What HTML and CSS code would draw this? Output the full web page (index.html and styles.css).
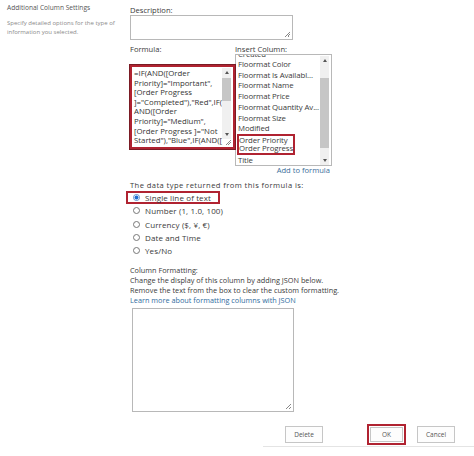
FILE: index.html
```html
<!DOCTYPE html>
<html lang="en">
<head>
    <meta charset="UTF-8">
    <title>Column Settings</title>
    <link rel="stylesheet" href="styles.css">
</head>
<body>
    <div class="page">
        <div class="side">
            <div class="side-title">Additional Column Settings</div>
            <div class="side-desc">Specify detailed options for the type of information you selected.</div>
        </div>

        <div class="main">
            <div class="label">Description:</div>
            <div class="box desc-box"><span class="grip"></span></div>

            <div class="formula-row">
                <div class="formula-col">
                    <div class="label">Formula:</div>
                    <div class="formula-box">
                        <div class="formula-text">=IF(AND([Order<br>Priority]="Important",<br>[Order Progress<br>]="Completed"),"Red",IF(<br>AND([Order<br>Priority]="Medium",<br>[Order Progress ]="Not<br>Started"),"Blue",IF(AND([</div>
                        <div class="scroll">
                            <span class="arrow up"></span>
                            <span class="thumb formula-thumb"></span>
                            <span class="arrow down"></span>
                        </div>
                        <span class="grip"></span>
                    </div>
                </div>
                <div class="insert-col">
                    <div class="label">Insert Column:</div>
                    <div class="listbox">
                        <div class="items">
                            <div class="peek"><div class="item">Created</div></div>
                            <div class="item">Floormat Color</div>
                            <div class="item">Floormat Is Availabl...</div>
                            <div class="item">Floormat Name</div>
                            <div class="item">Floormat Price</div>
                            <div class="item">Floormat Quantity Av...</div>
                            <div class="item">Floormat Size</div>
                            <div class="item">Modified</div>
                            <div class="marked">
                                <div class="item">Order Priority</div>
                                <div class="item">Order Progress</div>
                            </div>
                            <div class="item">Title</div>
                        </div>
                        <div class="scroll">
                            <span class="arrow up"></span>
                            <span class="thumb list-thumb"></span>
                            <span class="arrow down"></span>
                        </div>
                    </div>
                    <div class="add-link">Add to formula</div>
                </div>
            </div>

            <div class="type-title">The data type returned from this formula is:</div>
            <div class="radios">
                <div class="radio-row picked"><span class="radio on"></span>Single line of text</div>
                <div class="radio-row"><span class="radio"></span>Number (1, 1.0, 100)</div>
                <div class="radio-row"><span class="radio"></span>Currency ($, ¥, €)</div>
                <div class="radio-row"><span class="radio"></span>Date and Time</div>
                <div class="radio-row"><span class="radio"></span>Yes/No</div>
            </div>

            <div class="format">
                <div>Column Formatting:</div>
                <div>Change the display of this column by adding JSON below.</div>
                <div>Remove the text from the box to clear the custom formatting.</div>
                <div class="link">Learn more about formatting columns with JSON</div>
            </div>
            <div class="box json-box"><span class="grip"></span></div>
        </div>
    </div>

    <div class="footer">
        <button class="btn delete-btn">Delete</button>
        <span class="ok-mark"><button class="btn">OK</button></span>
        <button class="btn">Cancel</button>
    </div>
</body>
</html>
```

FILE: styles.css
```css
body {
    margin: 0;
    background: #ffffff;
    font-family: "Open Sans", "Noto Sans", sans-serif;
    color: #3a3a3a;
    width: 474px;
    height: 456px;
    overflow: hidden;
}

.page {
    display: flex;
}

.side {
    width: 116px;
    padding: 3px 0 0 7px;
}

.side-title {
    font-size: 6.6px;
    line-height: 9px;
    color: #555555;
}

.side-desc {
    margin-top: 7px;
    font-size: 6px;
    line-height: 9px;
    color: #8a8a8a;
}

.main {
    padding: 5px 0 0 7px;
    width: 210px;
    font-size: 7.6px;
}

.label {
    line-height: 10px;
}

.box {
    position: relative;
    border: 1px solid #b8b8b8;
    box-sizing: border-box;
}

.desc-box {
    width: 163px;
    height: 25px;
}

.grip {
    position: absolute;
    right: 2px;
    bottom: 2px;
    width: 5px;
    height: 5px;
    background: linear-gradient(135deg, transparent 45%, #888 45%, #888 55%, transparent 55%, transparent 70%, #888 70%, #888 80%, transparent 80%);
}

.formula-row {
    display: flex;
    margin-top: 4px;
}

.formula-col {
    width: 105px;
}

.formula-box {
    position: relative;
    margin-top: 11px;
    height: 84px;
    box-sizing: border-box;
    border: 2px solid #b02331;
    box-shadow: 0 0 0 1px #7a1b24;
    display: flex;
    overflow: hidden;
}

.formula-text {
    flex: 1;
    padding: 2px 0 0 2px;
    font-size: 7.8px;
    line-height: 9.6px;
    color: #333333;
    white-space: nowrap;
}

.scroll {
    width: 9px;
    background: #f0f0f0;
    display: flex;
    flex-direction: column;
    align-items: center;
}

.formula-box .scroll {
    margin: 1px 3px 8px 0;
}

.arrow {
    width: 0;
    height: 0;
    border-left: 2.5px solid transparent;
    border-right: 2.5px solid transparent;
    margin: 3px 0;
}

.arrow.up {
    border-bottom: 3px solid #555555;
}

.arrow.down {
    border-top: 3px solid #555555;
    margin-top: auto;
}

.thumb {
    width: 9px;
    background: #c6c6c6;
}

.formula-thumb {
    height: 23px;
    margin-top: 1px;
}

.insert-col {
    width: 97px;
}

.listbox {
    height: 112px;
    border: 1px solid #b8b8b8;
    box-sizing: border-box;
    display: flex;
    overflow: hidden;
}

.items {
    flex: 1;
    padding-left: 2px;
    font-size: 7.8px;
    line-height: 10.7px;
    letter-spacing: -0.1px;
    white-space: nowrap;
    overflow: hidden;
}

.peek {
    height: 4px;
    overflow: hidden;
}

.peek .item {
    margin-top: -6px;
}

.marked {
    border: 2px solid #b02331;
    margin-left: -1px;
    width: 54px;
    line-height: 8.5px;
}

.listbox .scroll {
    margin: 1px 2px 0 0;
}

.list-thumb {
    height: 70px;
    margin-top: 13px;
}

.add-link {
    text-align: right;
    padding-right: 2px;
    line-height: 9px;
    color: #3c6e9a;
}

.type-title {
    margin-top: 5px;
    line-height: 10px;
    font-size: 7.6px;
    letter-spacing: 0.42px;
}

.radios {
    margin-top: 1px;
    font-size: 8px;
    letter-spacing: 0.12px;
}

.radio-row {
    display: flex;
    align-items: center;
    height: 13.3px;
    padding-left: 3px;
}

.radio-row.picked {
    width: 94px;
    margin-left: -4px;
    padding-left: 5px;
    border: 2px solid #b02331;
    box-sizing: border-box;
}

.radio {
    width: 7px;
    height: 7px;
    border: 1px solid #777777;
    border-radius: 50%;
    box-sizing: border-box;
    margin-right: 5px;
}

.radio.on {
    border-color: #5b8fd0;
    background: radial-gradient(circle, #1f6fd0 0 1.8px, #ffffff 2.2px);
}

.format {
    margin-top: 8px;
    line-height: 10px;
    font-size: 7.3px;
    white-space: nowrap;
}

.link {
    color: #2f6c9e;
}

.json-box {
    width: 162px;
    height: 104px;
    margin: 3px 0 0 2px;
}

.footer {
    display: flex;
    align-items: center;
    margin: 12px 0 0 263px;
    padding: 0 19px 2px 22px;
    border-bottom: 1px solid #e4e4e4;
    height: 20px;
}

.btn {
    font-family: "Open Sans", "Noto Sans", sans-serif;
    font-size: 6.5px;
    color: #555555;
    background: #fdfdfd;
    border: 1px solid #c6c6c6;
    width: 38px;
    height: 17px;
    padding: 0;
}

.delete-btn {
    margin-right: auto;
}

.ok-mark {
    display: flex;
    border: 2px solid #b02331;
    padding: 1px;
    margin-right: 11px;
}

.ok-mark .btn {
    width: 33px;
    height: 15px;
}
```
